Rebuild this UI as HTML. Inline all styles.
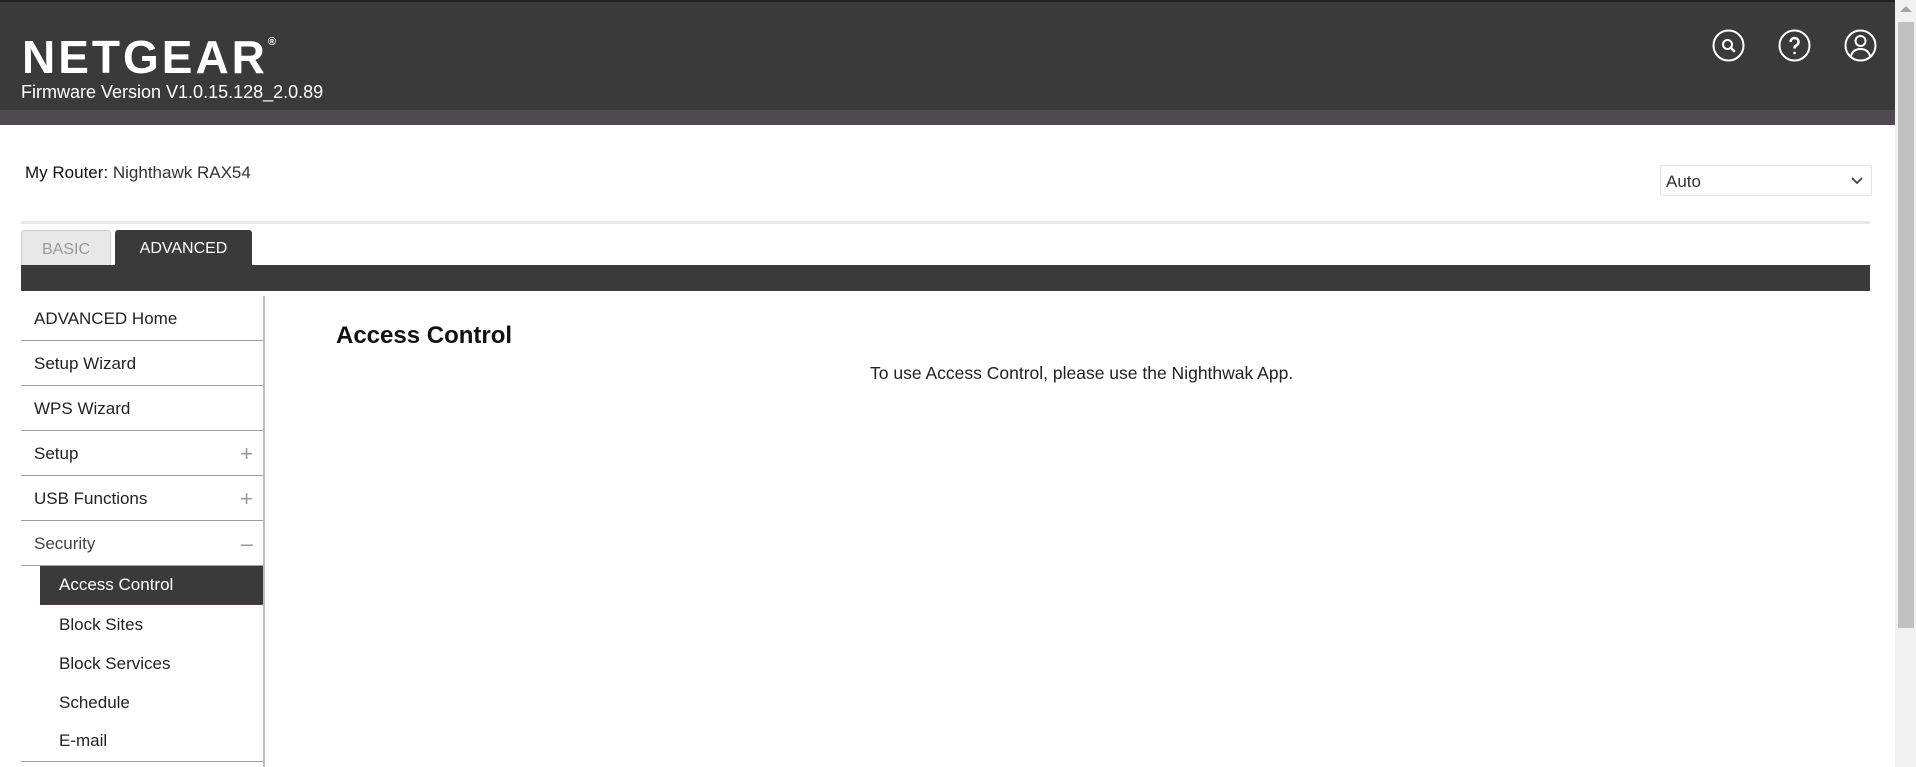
<!DOCTYPE html>
<html><head><meta charset="utf-8"><style>
*{margin:0;padding:0;box-sizing:border-box}
body{width:1916px;height:767px;overflow:hidden;background:#fff;font-family:"Liberation Sans",sans-serif;position:relative;color:#222}
.hdr{position:absolute;left:0;top:0;width:1895px;height:110px;background:#3a3a3a;border-top:2px solid #222}
.strip{position:absolute;left:0;top:110px;width:1895px;height:15px;background:#4e4a50}
.logo{position:absolute;left:22px;top:30px;color:#fff;font-weight:bold;font-size:46px;letter-spacing:3px}
.logo sup{font-size:11px;letter-spacing:0;vertical-align:top;position:relative;top:6px}
.fw{position:absolute;left:21px;top:82px;color:#fff;font-size:18px}
.ic{position:absolute;top:29px;width:33px;height:33px}
.sb{position:absolute;left:1895px;top:0;width:21px;height:767px;background:#f1f1f1}
.thumb{position:absolute;left:1898px;top:22px;width:16px;height:606px;background:#c1c1c1}
.t{position:absolute;white-space:nowrap}
.sel{position:absolute;left:1660px;top:165px;width:212px;height:31px;border:1px solid #e4e4e4;border-radius:2px;font-size:17px;color:#333;padding:6px 5px}
.tab{position:absolute;top:230px;height:35px;font-size:16px;text-align:center;line-height:38px;border-radius:3px 3px 0 0}
.nav{position:absolute;left:21px;width:242px;height:45px;border-bottom:1px solid #a0a0a0;font-size:17px;color:#222;padding-left:13px;line-height:46px}
.nav span{position:absolute;right:10px;top:0;color:#999;font-size:22px;font-weight:300}
.sub{position:absolute;left:59px;font-size:17px;color:#222}
</style></head><body>
<div class="hdr"></div><div class="strip"></div>
<div class="logo">NETGEAR<sup>®</sup></div>
<div class="fw">Firmware Version V1.0.15.128_2.0.89</div>
<svg class="ic" style="left:1712px" viewBox="0 0 33 33" fill="none" stroke="#fff" stroke-width="2"><circle cx="16.5" cy="16.5" r="15"/><circle cx="15.5" cy="15.5" r="4.5"/><path d="M18.8 18.8l4 4" stroke-width="2.5"/></svg>
<svg class="ic" style="left:1778px" viewBox="0 0 33 33" fill="none" stroke="#fff" stroke-width="2"><circle cx="16.5" cy="16.5" r="15"/><path d="M12.5 13a4 4 0 1 1 5.5 3.7c-1.2.6-1.5 1.3-1.5 2.8" stroke-width="2.6"/><circle cx="16.5" cy="24" r="1.3" fill="#fff" stroke="none"/></svg>
<svg class="ic" style="left:1844px" viewBox="0 0 33 33" fill="none" stroke="#fff" stroke-width="2"><circle cx="16.5" cy="16.5" r="15"/><circle cx="16.5" cy="12" r="5"/><path d="M7 27c1.5-5 5-7 9.5-7s8 2 9.5 7"/></svg>
<div class="sb"></div><div class="thumb"></div>
<div style="position:absolute;left:1900px;top:6px;width:0;height:0;border-left:6px solid transparent;border-right:6px solid transparent;border-bottom:6px solid #a3a3a3"></div>
<div class="t" style="left:25px;top:163px;font-size:17px;color:#111">My Router: <span style="color:#333">Nighthawk RAX54</span></div>
<div class="sel">Auto<svg style="position:absolute;right:8px;top:11px" width="12" height="8" viewBox="0 0 12 8"><path d="M1 1l5 5 5-5" fill="none" stroke="#444" stroke-width="1.8"/></svg></div>
<div style="position:absolute;left:21px;top:221px;width:1849px;height:3px;background:#e8e8e8"></div>
<div class="tab" style="left:21px;width:90px;background:#e8e8e8;color:#999;border:1px solid #ccc;border-bottom:none">BASIC</div>
<div class="tab" style="left:115px;width:137px;background:#3a3a3a;color:#fff">ADVANCED</div>
<div style="position:absolute;left:21px;top:265px;width:1849px;height:26px;background:#3a3a3a"></div>
<div style="position:absolute;left:263px;top:296px;width:2px;height:471px;background:#bbb"></div>
<div class="nav" style="top:296px">ADVANCED Home</div>
<div class="nav" style="top:341px">Setup Wizard</div>
<div class="nav" style="top:386px">WPS Wizard</div>
<div class="nav" style="top:431px">Setup<span>+</span></div>
<div class="nav" style="top:476px">USB Functions<span>+</span></div>
<div class="nav" style="top:521px;color:#444">Security<span>–</span></div>
<div style="position:absolute;left:40px;top:566px;width:223px;height:39px;background:#3a3a3a;border-bottom:1px solid #6b3050"></div>
<div class="sub" style="top:575px;color:#fff">Access Control</div>
<div class="sub" style="top:615px">Block Sites</div>
<div class="sub" style="top:654px">Block Services</div>
<div class="sub" style="top:693px">Schedule</div>
<div class="sub" style="top:731px">E-mail</div>
<div style="position:absolute;left:21px;top:761px;width:242px;height:1px;background:#a0a0a0"></div>
<div class="t" style="left:336px;top:322px;font-size:24px;font-weight:bold;color:#111">Access Control</div>
<div class="t" style="left:870px;top:363px;font-size:17.5px;color:#222">To use Access Control, please use the Nighthwak App.</div>
</body></html>
